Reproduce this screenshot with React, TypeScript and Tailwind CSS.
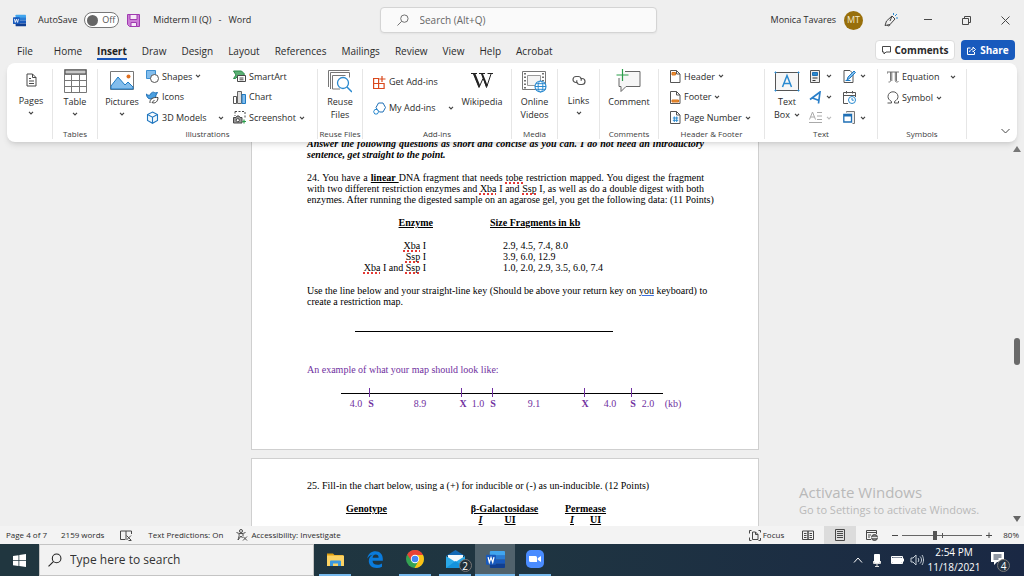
import type { ReactNode } from 'react';

const ui = "font-['Open_Sans','Noto_Sans',sans-serif]";

function Svg({ w, h, box, children }: { w: number; h: number; box?: string; children: ReactNode }) {
  return (
    <svg width={w} height={h} viewBox={box ?? `0 0 ${w} ${h}`} fill="none" stroke="#484848" className="shrink-0" aria-hidden="true">
      {children}
    </svg>
  );
}

function Chevron({ color = '#444' }: { color?: string }) {
  return (
    <Svg w={6} h={4}>
      <path d="M1 .8 3 2.8 5 .8" stroke={color} strokeWidth="1.2" />
    </Svg>
  );
}

/* ---------- Ribbon structure ---------- */

function Group({ label, width, children }: { label?: string; width: string; children: ReactNode }) {
  return (
    <section className={`flex shrink-0 flex-col ${width}`}>
      <div className="flex h-[62px]">{children}</div>
      <div className="h-3 text-center text-[8px] leading-3 whitespace-nowrap text-[#404040]">{label}</div>
    </section>
  );
}

function Divider() {
  return <div className="my-[3px] w-px shrink-0 bg-[#e6e6e6]" />;
}

function Big({ icon, lines, chevron, inlineChevron, width, low }: { icon: ReactNode; lines: string[]; chevron?: boolean; inlineChevron?: boolean; width: string; low?: boolean }) {
  return (
    <button className={`flex h-[60px] shrink-0 flex-col items-center ${width}`}>
      <span className={`flex items-center ${low ? 'h-7' : 'h-[29px]'}`}>{icon}</span>
      {lines.map((l, i) => (
        <span key={l} className="flex items-center gap-1 text-[9px] leading-[13px] whitespace-nowrap">
          {l}
          {inlineChevron && i === lines.length - 1 && <Chevron />}
        </span>
      ))}
      {chevron && <span className="flex h-3 items-center"><Chevron /></span>}
    </button>
  );
}

function Row({ icon, text, chevron, far, tall }: { icon: ReactNode; text: string; chevron?: boolean; far?: boolean; tall?: boolean }) {
  return (
    <button className={`flex items-center gap-[3px] text-[9px] whitespace-nowrap ${tall ? 'h-[26px]' : 'h-[21px]'}`}>
      {icon}
      <span>{text}</span>
      {chevron && <span className={far ? 'ml-auto' : ''}><Chevron /></span>}
    </button>
  );
}

function IconButton({ label, chevron, muted, children }: { label: string; chevron?: boolean; muted?: boolean; children: ReactNode }) {
  return (
    <button aria-label={label} className="flex h-[21px] items-center gap-1">
      {children}
      {chevron && <Chevron color={muted ? '#bbb' : '#444'} />}
    </button>
  );
}

/* ---------- Icons ---------- */

const PagesIcon = () => (
  <Svg w={11} h={14}>
    <path d="M1 1h5.5L10 4.5V13H1z M6.5 1v3.5H10 M3 5.5h2 M3 8h5 M3 10.5h5" />
  </Svg>
);
const TableIcon = () => (
  <Svg w={23} h={24}>
    <path d="M1 1h21v4H1z" fill="#c8c8c8" />
    <path d="M.5.5h22v23H.5z M.5 5.5h22 M.5 11.5h22 M.5 17.5h22 M7.5 5v18.500 M15.500 5v18.500" stroke="#777" />
  </Svg>
);
const PicturesIcon = () => (
  <Svg w={24} h={20}>
    <path d="M.5.5h23v18H.5z" fill="#fff" stroke="#777" />
    <path d="M1 15 8 6l7 8 3-3 5 5v2H1z" fill="#83bdec" stroke="#1e7bc4" />
    <circle cx="18.500" cy="5.500" r="2" fill="#e07020" stroke="none" />
  </Svg>
);
const ShapesIcon = () => (
  <Svg w={13} h={13}>
    <path d="M.5.5h9v8h-9z" fill="#83bdec" stroke="#3d8fd1" />
    <circle cx="8.500" cy="8.500" r="4" fill="#fff" stroke="#555" />
  </Svg>
);
const IconsIcon = () => (
  <Svg w={13} h={13}>
    <path d="M.5 3c1 1.500 3 1.500 4 .5C5 1 8 .5 9 2l2.500-.5L10 4c0 3-2 4-5 4C2 8 .5 6 .5 3z" fill="#4a9fe0" stroke="#1e6fb5" />
    <path d="M4 12c-.5-4 3-6 8-5.500 0 4-3 6.500-6 5L8.500 9" fill="#fff" stroke="#444" />
  </Svg>
);
const CubeIcon = () => (
  <Svg w={13} h={13}>
    <path d="m6.500 1 5 2.500v6l-5 2.800-5-2.800v-6z M1.500 3.500l5 2.700 5-2.700 M6.500 6.200v6" stroke="#2077c0" strokeWidth="1.100" fill="#f1f8fd" />
  </Svg>
);
const SmartArtIcon = () => (
  <Svg w={13} h={13}>
    <path d="M.5 1h8l3 3-1.500 2H5l-2.500 2.500H.5L3 5z" fill="#5db075" stroke="#2a8b4a" />
    <path d="M4.500 5.500h8v6h-8z M6.500 8h4 M6.500 9.800h4" fill="#fff" />
  </Svg>
);
const ChartIcon = () => (
  <Svg w={13} h={13}>
    <path d="M.5 5.500h3v7h-3z" fill="#fff" stroke="#555" />
    <path d="M4.500.5h4v12h-4z" fill="#ddd" stroke="#666" />
    <path d="M9 3.500h3.500v9H9z" fill="#83bdec" stroke="#1e7bc4" />
  </Svg>
);
const ScreenshotIcon = () => (
  <Svg w={13} h={13}>
    <path d="M2 .5h10V8 M2 .5V5" strokeDasharray="2 1.500" />
    <path d="M.5 6.500H3l1-1.500h2l1 1.500h2V12H.5z" fill="#999" />
    <circle cx="4.800" cy="9.200" r="1.600" fill="#fff" />
    <path d="M11 8.500v4 M9.200 10.500H13" stroke="#2a9d4a" strokeWidth="1.200" />
  </Svg>
);
const ReuseIcon = () => (
  <Svg w={24} h={24}>
    <path d="M.5 18V1.500H21.500 M2.500 20V3.500h19v5 M12 20H4.500V6.500h13" stroke="#777" />
    <circle cx="15" cy="14" r="5.500" fill="#fff" stroke="#2a8ad0" strokeWidth="1.300" />
    <path d="m19 18 5 5" stroke="#2a8ad0" strokeWidth="1.500" />
  </Svg>
);
const GetAddinsIcon = () => (
  <Svg w={13} h={13}>
    <path d="M.6 2.500h5v5h-5z M.6 7.500h5v5h-5z M5.600 7.500h5.500v5H5.600z M9 0v6 M6.500 3h6" stroke="#d9481c" strokeWidth="1.200" />
  </Svg>
);
const MyAddinsIcon = () => (
  <Svg w={13} h={13}>
    <path d="M5.500 1h4.500l2.500 4.500L10 10H6.500L4.500 8 3 5.500z" stroke="#1e6fb5" />
    <path d="M1.800 7.500h2.500l1.300 2.300L4.300 12H1.800L.6 9.800z" fill="#fff" stroke="#2a8ad0" />
  </Svg>
);
const WikipediaIcon = () => (
  <Svg w={22} h={18}>
    <path d="M0 1.500h6 M8 1.500h6 M16.500 1.500H22" stroke="#222" />
    <path d="M2.500 2 8 15.500l4-9 M11 2l4.500 13.500L20 2" stroke="#222" strokeWidth="1" />
    <path d="m3.500 2 4.800 12 M11 2l4.800 12" stroke="#222" strokeWidth="2" />
  </Svg>
);
const VideoIcon = () => (
  <Svg w={25} h={24}>
    <path d="M.5 2.500h23v18H.5z" fill="#fff" stroke="#777" />
    <path d="M5.500 6.500h13v10h-13z" fill="#f4f4f4" stroke="#999" />
    <path d="M3 4v16 M21 4v8" stroke="#444" strokeWidth="1.500" strokeDasharray="1.500 2" />
    <circle cx="18.500" cy="17.500" r="5.500" fill="#fff" stroke="#2a8ad0" strokeWidth="1.100" />
    <path d="M13 17.500h11 M14 14.700h9 M14 20.300h9" stroke="#2a8ad0" />
    <ellipse cx="18.500" cy="17.500" rx="2.400" ry="5.500" stroke="#2a8ad0" />
  </Svg>
);
const LinksIcon = () => (
  <Svg w={14} h={11}>
    <path d="M5.500 7.500H4a3 3 0 0 1 0-6h2.500a3 3 0 0 1 2.500 4.300" stroke="#555" strokeWidth="1.200" />
    <path d="M8.500 3.500H10a3 3 0 0 1 0 6H7.500A3 3 0 0 1 5 5.200" stroke="#555" strokeWidth="1.200" />
  </Svg>
);
const CommentIcon = () => (
  <Svg w={26} h={24}>
    <path d="M9 2.500h15v15H10l-5 5v-5H3V9" fill="#f6f6f6" stroke="#666" />
    <path d="M6.500 0v12 M.5 6h12" stroke="#2a9d4a" strokeWidth="1.200" />
  </Svg>
);
function PageIcon({ kind }: { kind: 'header' | 'footer' | 'number' }) {
  return (
    <Svg w={11} h={13}>
      <path d="M.5.5h6l3.500 3.500v8.500H.5z M6.500.5v3.500H10" fill="#fff" stroke="#555" />
      {kind === 'header' && <path d="M2 2.500h3.500v2.500H2z" fill="#e69138" stroke="#d9741c" />}
      {kind === 'footer' && <path d="M2 9h6.500v2H2z" fill="#e69138" stroke="#d9741c" />}
      {kind === 'number' && <path d="M4.300 5.500v5.500 M6.700 5.500v5.500 M2.800 7h5.400 M2.800 9.300h5.400" stroke="#2a8ad0" />}
    </Svg>
  );
}
const TextBoxIcon = () => (
  <Svg w={26} h={22}>
    <path d="M1.500 2.500h23v18h-23z" fill="#f6f6f6" stroke="#555" />
    <path d="M8.500 17 13 5.500 17.500 17 M10 13.500h6" stroke="#2a8ad0" strokeWidth="1.500" />
    <path d="M1 2h1v1H1z M24 2h1v1h-1z M1 20h1v1H1z M24 20h1v1h-1z" fill="#2a8ad0" stroke="#2a8ad0" />
  </Svg>
);
const QuickPartsIcon = () => (
  <Svg w={13} h={13}>
    <path d="M1.500.5h9v12h-9z" fill="#eee" stroke="#555" />
    <path d="M3.500 2.500h5v3h-5z" fill="#2a8ad0" stroke="#1e6fb5" />
    <path d="M3.500 8h5 M3.500 10.500h3" stroke="#333" />
  </Svg>
);
const WordArtIcon = () => (
  <Svg w={13} h={13}>
    <path d="M1 8.500 11 1 9.500 12.500 M3.500 7l6.500 2.500" stroke="#2a7fc9" strokeWidth="1.700" />
  </Svg>
);
const DropCapIcon = () => (
  <Svg w={13} h={13}>
    <path d="m.5 8.500 3-7.500 3 7.500 M1.500 6h4 M8 1.500h5 M8 5h5 M8 8.500h5 M0 11.500h13" stroke="#aaa" />
  </Svg>
);
const SignatureIcon = () => (
  <Svg w={13} h={13}>
    <path d="M1 .5h6l3 3v9H1z" fill="#fff" stroke="#555" />
    <path d="m4 10 1-3 6-6 1.500 1.500-6 6z" fill="#83bdec" stroke="#1e7bc4" />
    <path d="M2.500 10.500h5" stroke="#1e7bc4" />
  </Svg>
);
const DateIcon = () => (
  <Svg w={13} h={13}>
    <path d="M5 12.500H.5v-11h12V6 M.5 4.500h12 M3.500 0v2.500 M9.500 0v2.500" stroke="#555" />
    <circle cx="9" cy="9" r="3.500" fill="#fff" stroke="#2a8ad0" />
    <path d="M9 7v2.200h1.800" stroke="#2a8ad0" />
  </Svg>
);
const ObjectIcon = () => (
  <Svg w={13} h={13}>
    <path d="M3.500 1.500V.5h8v12h-2" stroke="#777" fill="#f0f0f0" />
    <path d="M.8 3.500h7.700v7.500H.8z" fill="#fff" stroke="#1e6fb5" strokeWidth="1.300" />
    <path d="M1 4.500h7.500" stroke="#1e6fb5" strokeWidth="2" />
  </Svg>
);
const PiIcon = () => (
  <Svg w={12} h={12}>
    <path d="M0 1h12 M0 1v2 M3.500 1v8.500c0 1.500-1 1.800-2 1.500 M8.300 1v8.500c0 1.800 1.700 1.800 3.200 1 M4.800 1v9 M9.500 1v9" stroke="#666" strokeWidth=".9" />
  </Svg>
);
const OmegaIcon = () => (
  <Svg w={12} h={13}>
    <path d="M.5 12h4V10.500C2 9 1 7.500 1 5.500A4.800 4.800 0 0 1 6 .8a4.800 4.800 0 0 1 5 4.700c0 2-1 3.500-3.500 5V12h4V10" stroke="#555" />
  </Svg>
);
const WordIcon = ({ size }: { size: number }) => (
  <Svg w={size} h={size} box="0 0 20 20">
    <g stroke="none">
      <path d="M5 1h14a1 1 0 0 1 1 1v4H4V2a1 1 0 0 1 1-1z" fill="#41a5ee" />
      <path d="M4 5.500h16V10H4z" fill="#2b7cd3" />
      <path d="M4 10h16v4.500H4z" fill="#185abd" />
      <path d="M4 14.500h16V18a1 1 0 0 1-1 1H5a1 1 0 0 1-1-1z" fill="#103f91" />
      <rect y="5" width="10.500" height="10.500" rx="1" fill="#185abd" />
    </g>
    <path d="m2.200 7.500 1.300 5.500 1.800-5 1.800 5 1.300-5.500" stroke="#fff" strokeWidth="1.300" />
  </Svg>
);
const SearchGlass = ({ size, color }: { size: number; color: string }) => (
  <Svg w={size} h={size} box="0 0 13 13">
    <circle cx="8" cy="5" r="4" stroke={color} />
    <path d="m5 8-4.500 4.500" stroke={color} />
  </Svg>
);

/* ---------- Document ---------- */

function Wavy({ children }: { children: ReactNode }) {
  return (
    <span className="underline decoration-[#e53935] decoration-dotted decoration-2 underline-offset-1 [text-decoration-skip-ink:none]">{children}</span>
  );
}

const tabs = ['File', 'Home', 'Insert', 'Draw', 'Design', 'Layout', 'References', 'Mailings', 'Review', 'View', 'Help', 'Acrobat'];

const ticks = [28, 120, 151, 243, 290];
const mapLabels: { x: number; text: string; bold?: boolean }[] = [
  { x: 15, text: '4.0' },
  { x: 30, text: 'S', bold: true },
  { x: 79, text: '8.9' },
  { x: 122, text: 'X', bold: true },
  { x: 137, text: '1.0' },
  { x: 152, text: 'S', bold: true },
  { x: 193, text: '9.1' },
  { x: 244, text: 'X', bold: true },
  { x: 269, text: '4.0' },
  { x: 292, text: 'S', bold: true },
  { x: 307, text: '2.0' },
  { x: 332, text: '(kb)' },
];

function Document() {
  return (
    <div className="min-w-0 flex-1 font-['Liberation_Serif',serif] text-[10px] leading-[11px] text-black">
      <article className="mx-auto -mt-1 h-[312px] w-[508px] border border-[#cfcfcf] bg-white pr-[54px] pl-[55px]">
        <p className="-mt-px font-bold whitespace-nowrap italic">
          <span className="block [text-align-last:justify]">Answer the following questions as short and concise as you can. I do not need an introductory</span>
          sentence, get straight to the point.
        </p>
        <p className="mt-3 whitespace-nowrap">
          <span className="block [text-align-last:justify]">24. You have a <b className="underline">linear </b>DNA fragment that needs <Wavy>tobe</Wavy> restriction mapped. You digest the fragment</span>
          <span className="block [text-align-last:justify]">with two different restriction enzymes and <Wavy>Xba</Wavy> I and <Wavy>Ssp</Wavy> I, as well as do a double digest with both</span>
          <span className="block [text-align-last:justify]">enzymes. After running the digested sample on an agarose gel, you get the following data: (11 Points)</span>
        </p>
        <table className="mt-3 whitespace-nowrap">
          <thead>
            <tr className="h-[23px] align-top underline">
              <th className="w-[126px] p-0 text-right">Enzyme</th>
              <th className="p-0 pl-[57px] text-left">Size Fragments in kb</th>
            </tr>
          </thead>
          <tbody>
            <tr>
              <td className="p-0 pr-[7px] text-right"><Wavy>Xba</Wavy> I</td>
              <td className="p-0 pl-[70px]">2.9, 4.5, 7.4, 8.0</td>
            </tr>
            <tr>
              <td className="p-0 pr-[7px] text-right"><Wavy>Ssp</Wavy> I</td>
              <td className="p-0 pl-[70px]">3.9, 6.0, 12.9</td>
            </tr>
            <tr>
              <td className="p-0 pr-[7px] text-right"><Wavy>Xba</Wavy> I and <Wavy>Ssp</Wavy> I</td>
              <td className="p-0 pl-[70px]">1.0, 2.0, 2.9, 3.5, 6.0, 7.4</td>
            </tr>
          </tbody>
        </table>
        <p className="mt-3 whitespace-nowrap">
          <span className="block [text-align-last:justify]">Use the line below and your straight-line key (Should be above your return key on <span className="underline decoration-[#3b6fe0]">you</span> keyboard) to</span>
          create a restriction map.
        </p>
        <hr className="mt-6 ml-12 w-[258px] border-t border-black" />
        <p className="mt-8 text-[#7030a0]">An example of what your map should look like:</p>
        <svg width="375" height="28" className="mt-3 ml-[34px]" role="img" aria-label="Example restriction map">
          <path d="M0 6.500h322" stroke="#000" strokeWidth="1" />
          {ticks.map((x) => (
            <path key={x} d={`M${x + 0.5} 1v9`} stroke="#7030a0" />
          ))}
          {mapLabels.map((l) => (
            <text key={l.x} x={l.x} y="20" textAnchor="middle" fontSize="10" fill="#7030a0" fontWeight={l.bold ? 700 : 400}>{l.text}</text>
          ))}
        </svg>
      </article>
      <article className="mx-auto mt-2 h-[600px] w-[508px] border border-[#cfcfcf] bg-white pt-[21px] pl-[55px]">
        <p>25. Fill-in the chart below, using a (+) for inducible or (-) as un-inducible. (12 Points)</p>
        <table className="mt-3 ml-3 w-[290px] table-fixed text-center font-bold whitespace-nowrap">
          <colgroup>
            <col className="w-[95px]" />
            <col className="w-[56px]" />
            <col className="w-[21px]" />
            <col className="w-[48px]" />
            <col className="w-[23px]" />
            <col className="w-[20px]" />
            <col className="w-[27px]" />
          </colgroup>
          <thead>
            <tr className="underline">
              <th className="p-0">Genotype</th>
              <th />
              <th colSpan={2} className="p-0">β-Galactosidase</th>
              <th />
              <th colSpan={2} className="p-0">Permease</th>
            </tr>
          </thead>
          <tbody>
            <tr className="underline">
              <td colSpan={2} />
              <td className="p-0 italic">I</td>
              <td className="p-0 pr-[10px]">UI</td>
              <td />
              <td className="p-0 italic">I</td>
              <td className="p-0">UI</td>
            </tr>
          </tbody>
        </table>
      </article>
    </div>
  );
}

/* ---------- Taskbar ---------- */

function TaskbarApp({ label, open, active, children }: { label: string; open?: boolean; active?: boolean; children: ReactNode }) {
  return (
    <button aria-label={label} className={`flex h-8 w-10 flex-col items-center ${active ? 'bg-[#50626c]' : ''}`}>
      <span className="flex h-[30px] items-center">{children}</span>
      {open && <span className={`h-0.5 bg-[#76b9ed] ${active ? 'w-10' : 'w-8'}`} />}
    </button>
  );
}

function Taskbar() {
  return (
    <footer className="flex h-8 shrink-0 items-center bg-linear-to-r from-[#20363f] via-[#1f3541] to-[#1a2844] text-white">
      <button aria-label="Start" className="flex h-8 w-[39px] items-center justify-center">
        <Svg w={13} h={13}>
          <path d="M0 2l5.500-.8v5H0z M6.300 1 13 0v6.200H6.300z M0 7h5.500v5L0 11.200z M6.300 7H13v6l-6.700-1z" fill="#fff" stroke="none" />
        </Svg>
      </button>
      <label className="flex h-8 w-[275px] items-center gap-2 border border-[#c4c4c4] bg-[#f2f2f2] pl-2">
        <SearchGlass size={14} color="#222" />
        <input aria-label="Search Windows" placeholder="Type here to search" className="min-w-0 flex-1 bg-transparent text-[12px] outline-none placeholder:text-[#333] placeholder:opacity-100" />
      </label>
      <nav aria-label="Apps" className="flex pl-px">
        <TaskbarApp label="File Explorer" open>
          <Svg w={17} h={15}>
            <path d="M0 1.500h6l1.500 1.500H16V6H0z" fill="#e0a010" stroke="none" />
            <path d="M0 3.500h17V14H0z" fill="#fcd364" stroke="none" />
            <path d="M3 14V9.500a1 1 0 0 1 1-1h9a1 1 0 0 1 1 1V14h-3v-2.500H6V14z" fill="#3b9ae0" stroke="none" />
          </Svg>
        </TaskbarApp>
        <TaskbarApp label="Edge">
          <Svg w={16} h={17}>
            <path d="M.3 7.500C1.200 2.500 4.500.3 8.500.3c4.500 0 7.300 3.200 7.300 7.500v1.900H5.500c.3 3 2.300 4 5 4 1.700 0 3.200-.5 4.500-1.300v3.400c-1.500.8-3.200 1.200-5.200 1.200-5 0-8-2.800-8-7 0-3 1.500-5 4-6.300C3 4.200 1.500 5.500.3 7.500zM5.600 6.700h6c0-2-1-3.200-2.900-3.200-1.800 0-2.800 1.200-3.100 3.200z" fill="#0a7bdc" stroke="none" />
          </Svg>
        </TaskbarApp>
        <TaskbarApp label="Chrome" open>
          <Svg w={18} h={18}>
            <g stroke="none">
              <circle cx="9" cy="9" r="9" fill="#34a353" />
              <path d="M1.200 4.500A9 9 0 0 1 16.800 4.500L17 5H9L5.500 11z" fill="#e94335" />
              <path d="M9 5h8A9 9 0 0 1 8.500 18l4-7z" fill="#fbc116" />
              <circle cx="9" cy="9" r="4.200" fill="#fff" />
              <circle cx="9" cy="9" r="3.300" fill="#4285f4" />
            </g>
          </Svg>
        </TaskbarApp>
        <TaskbarApp label="Mail, 2 new" open>
          <span className="relative">
            <Svg w={19} h={18}>
              <g stroke="none">
                <path d="m0 6 9.500-6L19 6z" fill="#1168b5" />
                <path d="M2 5h15v8H2z" fill="#f3f8fb" />
                <path d="M0 6l9.500 6L19 6v12H0z" fill="#2aa9e8" />
                <path d="m0 18 9.500-7 9.500 7z" fill="#1593dc" />
              </g>
            </Svg>
            <span className="absolute top-[9px] left-[13px] flex size-[13px] items-center justify-center rounded-full border border-[#777] bg-[#22303a] text-[10px] leading-none">2</span>
          </span>
        </TaskbarApp>
        <TaskbarApp label="Word" open active><WordIcon size={19} /></TaskbarApp>
        <TaskbarApp label="Zoom" open>
          <Svg w={18} h={18}>
            <rect width="18" height="18" rx="5" fill="#4a8cff" stroke="none" />
            <path d="M3 6h6.500a1.500 1.500 0 0 1 1.500 1.500V12H4.500A1.500 1.500 0 0 1 3 10.500z M11.700 8.200 15 6v6l-3.300-2.200z" fill="#fff" stroke="none" />
          </Svg>
        </TaskbarApp>
      </nav>
      <div className="ml-auto flex h-8 items-center text-[10px]">
        <Svg w={10} h={6}><path d="m1 5.500 4-4.500 4 4.500" stroke="#fff" /></Svg>
        <span className="ml-[10px]"><Svg w={8} h={13}><path d="M1.500.5h5v8h-5z" fill="#fff" stroke="#fff" /><path d="M.5 7v2.500h7V7 M4 10v2 M2 12.500h4" stroke="#ddd" /></Svg></span>
        <span className="ml-[10px]"><Svg w={13} h={8}><path d="M.5.500h11v7H.5z" stroke="#fff" /><path d="M1.500 2h9v4.500h-9z" fill="#fff" stroke="#fff" /><path d="M12.500 2.500v3" stroke="#fff" /></Svg></span>
        <span className="ml-[6px]"><Svg w={14} h={12}><path d="M1 4h2l3-3v10L3 8H1z M8 4c1 1 1 3 0 4 M10 2.500c2 2 2 5 0 7 M12 1c2 3 2 7 0 10" stroke="#c5ced6" /></Svg></span>
        <time className="w-[60px] text-center leading-[15px]">2:54 PM<br />11/18/2021</time>
        <button aria-label="Notifications, 4" className="relative mr-[15px] ml-[7px]">
          <Svg w={18} h={20}>
            <path d="M0 2h13v10H6l-3 3v-3H0z" fill="#fff" stroke="none" />
            <path d="M2.500 5h8 M2.500 7h8 M2.500 9h5" stroke="#20304a" />
          </Svg>
          <span className="absolute top-[9px] left-[6px] flex size-[13px] items-center justify-center rounded-full border border-[#777] bg-[#263344] text-[10px] leading-none">4</span>
        </button>
      </div>
    </footer>
  );
}

/* ---------- App ---------- */

export default function App() {
  return (
    <div className={`flex h-screen flex-col overflow-hidden bg-[#efefef] text-[#2b2b2b] ${ui}`}>
      <header className="flex h-10 shrink-0 items-center justify-between text-[9px]">
        <div className="flex flex-1 items-center pl-[13px]">
          <WordIcon size={13} />
          <span className="ml-3" id="autosave">AutoSave</span>
          <button role="switch" aria-checked="false" aria-labelledby="autosave" className="ml-[7px] flex h-4 w-[35px] items-center gap-1 rounded-full border border-[#777] bg-white pl-[2px] text-[9px] text-[#555]">
            <span className="size-[11px] rounded-full bg-[#666]" />
            Off
          </button>
          <button aria-label="Save" className="ml-2">
            <Svg w={13} h={13}>
              <path d="M.5.5h12v12h-10l-2-2z" fill="#cc7fd6" stroke="#a03bb0" />
              <path d="M3 .5h7v5H3z M4 8.500h5.500v4H4z" fill="#f7eaf8" stroke="#a03bb0" />
            </Svg>
          </button>
          <h1 className="ml-[13px] flex gap-[7px]"><span>Midterm II (Q)</span><span>-</span><span>Word</span></h1>
        </div>
        <label className="ml-[13px] flex h-[26px] w-[277px] items-center gap-[11px] rounded border border-[#d4d4d4] bg-[#fafafa] pl-4 shadow-xs">
          <SearchGlass size={12} color="#666" />
          <input aria-label="Search" placeholder="Search (Alt+Q)" className="min-w-0 flex-1 bg-transparent text-[10px] outline-none placeholder:text-[#666] placeholder:opacity-100" />
        </label>
        <div className="flex flex-1 items-center justify-end pr-[14px]">
          <span>Monica Tavares</span>
          <span className="ml-2 flex size-[19px] items-center justify-center rounded-full bg-[#986f0b] text-[#f5e9c8]">MT</span>
          <button aria-label="What's new" className="ml-[21px]">
            <Svg w={14} h={14}>
              <path d="M1 12.500 2.500 8 8 3l3 3-5 5.500z M3 12c1 1.500 3 1 3-.5 M8 3l-2 5" stroke="#444" />
              <path d="M9.500 2V0 M11 3l2-2 M12 5h2" stroke="#2a8ad0" />
            </Svg>
          </button>
          <button aria-label="Minimize" className="ml-[26px]"><Svg w={8} h={10}><path d="M0 4.500h8" /></Svg></button>
          <button aria-label="Restore" className="ml-[30px]"><Svg w={9} h={9}><path d="M.5 2.500h6v6h-6z M2.500 2.500v-2h6v6h-2" /></Svg></button>
          <button aria-label="Close" className="ml-[30px]"><Svg w={9} h={9}><path d="m.5.500 8 8 M8.500.500l-8 8" /></Svg></button>
        </div>
      </header>

      <div className="flex h-[23px] shrink-0 items-start justify-between pr-[9px] pl-[17px]">
        <nav aria-label="Ribbon tabs" className="flex gap-[15px] pt-1 text-[10px]">
          {tabs.map((t) => (
            <button key={t} className={`h-4 border-b-2 first:mr-[6px] ${t === 'Insert' ? 'border-[#1a56b8] font-bold text-[#222]' : 'border-transparent'}`}>
              <span className="block leading-[14px]">{t}</span>
            </button>
          ))}
        </nav>
        <div className="flex gap-[6px] text-[10px] font-bold">
          <button className="flex h-5 w-20 items-center justify-center gap-1 rounded border border-[#ddd] bg-white">
            <Svg w={9} h={9}><path d="M.5.500h8v5.500H4L2 8V6H.5z" /></Svg>
            Comments
          </button>
          <button className="flex h-5 w-[54px] items-center justify-center gap-1 rounded bg-[#185abd] text-white">
            <Svg w={9} h={9}><path d="M3.500 2H.5v6.500h7V6 M2.500 6C3 4 4.500 3 6 3V1l2.500 2.500L6 6V4.500" stroke="#fff" /></Svg>
            Share
          </button>
        </div>
      </div>

      <div className="z-10 mx-[7px] flex h-[79px] shrink-0 rounded-lg bg-white pt-[3px] shadow-md">
        <Group width="w-[45px]"><Big width="w-12" low icon={<PagesIcon />} lines={['Pages']} chevron /></Group>
        <Divider />
        <Group width="w-11" label="Tables"><Big width="w-11" icon={<TableIcon />} lines={['Table']} chevron /></Group>
        <Divider />
        <Group width="w-[219px]" label="Illustrations">
          <Big width="w-12" icon={<PicturesIcon />} lines={['Pictures']} chevron />
          <div className="flex w-[78px] flex-col">
            <Row icon={<ShapesIcon />} text="Shapes" chevron />
            <Row icon={<IconsIcon />} text="Icons" />
            <Row icon={<CubeIcon />} text="3D Models" chevron far />
          </div>
          <div className="ml-[9px] flex flex-col">
            <Row icon={<SmartArtIcon />} text="SmartArt" />
            <Row icon={<ChartIcon />} text="Chart" />
            <Row icon={<ScreenshotIcon />} text="Screenshot" chevron />
          </div>
        </Group>
        <Divider />
        <Group width="w-11" label="Reuse Files"><Big width="w-11" icon={<ReuseIcon />} lines={['Reuse', 'Files']} /></Group>
        <Divider />
        <Group width="w-[148px]" label="Add-ins">
          <div className="flex w-[91px] flex-col pt-[3px] pl-[10px]">
            <Row icon={<GetAddinsIcon />} text="Get Add-ins" tall />
            <Row icon={<MyAddinsIcon />} text="My Add-ins" chevron far tall />
          </div>
          <Big width="w-14" icon={<WikipediaIcon />} lines={['Wikipedia']} />
        </Group>
        <Divider />
        <Group width="w-[45px]" label="Media"><Big width="w-[45px]" icon={<VideoIcon />} lines={['Online', 'Videos']} /></Group>
        <Divider />
        <Group width="w-[41px]"><Big width="w-[41px]" low icon={<LinksIcon />} lines={['Links']} chevron /></Group>
        <Divider />
        <Group width="w-[58px]" label="Comments"><Big width="w-[58px]" icon={<CommentIcon />} lines={['Comment']} /></Group>
        <Divider />
        <Group width="w-[105px]" label="Header & Footer">
          <div className="flex flex-col pl-[11px]">
            <Row icon={<PageIcon kind="header" />} text="Header" chevron />
            <Row icon={<PageIcon kind="footer" />} text="Footer" chevron />
            <Row icon={<PageIcon kind="number" />} text="Page Number" chevron />
          </div>
        </Group>
        <Divider />
        <Group width="w-[112px]" label="Text">
          <Big width="w-11" icon={<TextBoxIcon />} lines={['Text', 'Box']} inlineChevron />
          <div className="flex flex-col">
            <IconButton label="Quick Parts" chevron><QuickPartsIcon /></IconButton>
            <IconButton label="WordArt" chevron><WordArtIcon /></IconButton>
            <IconButton label="Drop Cap" chevron muted><DropCapIcon /></IconButton>
          </div>
          <div className="ml-[11px] flex flex-col">
            <IconButton label="Signature Line" chevron><SignatureIcon /></IconButton>
            <IconButton label="Date and Time"><DateIcon /></IconButton>
            <IconButton label="Object" chevron><ObjectIcon /></IconButton>
          </div>
        </Group>
        <Divider />
        <Group width="w-[88px]" label="Symbols">
          <div className="flex w-[78px] flex-col pl-[9px]">
            <Row icon={<PiIcon />} text="Equation" chevron far />
            <Row icon={<OmegaIcon />} text="Symbol" chevron />
          </div>
        </Group>
        <Divider />
        <div className="flex flex-1 items-end justify-end pr-[7px] pb-2">
          <button aria-label="Collapse ribbon"><Svg w={9} h={6}><path d="m.5 1 4 4 4-4" /></Svg></button>
        </div>
      </div>

      <main className="relative flex min-h-0 flex-1 overflow-hidden">
        <Document />
        <div className="flex w-[14px] shrink-0 flex-col items-center py-1">
          <Svg w={8} h={6}><path d="m0 6 4-6 4 6z" fill="#777" stroke="none" /></Svg>
          <div className="mt-[186px] h-[27px] w-[6px] rounded-full bg-[#6a6a6a]" />
          <span className="mt-auto"><Svg w={8} h={6}><path d="m0 0 4 6 4-6z" fill="#666" stroke="none" /></Svg></span>
        </div>
        <div className="absolute right-[41px] bottom-2 w-[184px] whitespace-nowrap text-[#b9b9b9]">
          <p className="text-[15px] leading-5">Activate Windows</p>
          <p className="text-[11px] leading-4">Go to Settings to activate Windows.</p>
        </div>
      </main>

      <div className="flex h-[18px] shrink-0 items-center bg-[#f3f3f3] pl-[6px] text-[8px] whitespace-nowrap">
        <span>Page 4 of 7</span>
        <span className="ml-[14px]">2159 words</span>
        <button aria-label="Proofing" className="ml-4"><Svg w={12} h={11}><path d="M5.500 9.500H.5V1h5.500v8 M6 1h5.500v3 M6.500 5.500l4.500 4.500 M11 5.500 6.500 10 M8.500 10.500h3" /></Svg></button>
        <span className="ml-4">Text Predictions: On</span>
        <button className="ml-[13px] flex items-center gap-[3px]">
          <Svg w={12} h={12}><circle cx="5" cy="2" r="1.500" /><path d="M.5 3.500c3 1.500 6 1.500 9 0 M3 5c.5 2-.5 4-1 6l3-4 1.500 2 M7 5v2 M7 7.500l4 4 M11 7.500l-4 4" /></Svg>
          Accessibility: Investigate
        </button>
        <div className="ml-auto flex items-center pr-[5px]">
          <button className="flex items-center gap-[2px]">
            <Svg w={12} h={11}><path d="M2.500.500H.5v3 M.5 7.500v3h2 M9.500.500h2v2 M11.500 8v2.500h-2 M3.500 2h3L9 4.500v5H3.500z M6.500 2v2.500H9" /></Svg>
            Focus
          </button>
          <button aria-label="Read Mode" className="ml-[18px]"><Svg w={12} h={11}><path d="M.5 1h5.500v8.500H.5z M6 1h5.500v8.500H6z M2 3.500h2.500 M2 5.500h2.500 M2 7.500h2.500 M7.500 3.500H10 M7.500 5.500H10 M7.500 7.500H10" /></Svg></button>
          <button aria-label="Print Layout" className="ml-[10px] flex h-[18px] w-8 items-center justify-center bg-[#dcdcdc]"><Svg w={10} h={12}><path d="M.5.500h9v11h-9z M2 2.500h6 M2 4.500h6 M2 6.500h6 M2 8.500h6" /></Svg></button>
          <button aria-label="Web Layout" className="ml-[10px]"><Svg w={12} h={11}><path d="M5 9.500H.5v-9h10V4 M.5 2.500h10 M2 5h3 M2 7h2" /><circle cx="8.500" cy="7.500" r="3" fill="#777" /><path d="M5.500 7.500h6" stroke="#fff" strokeWidth=".8" /></Svg></button>
          <span className="ml-[14px]"><Svg w={6} h={6}><path d="M0 3.500h6" /></Svg></span>
          <span className="relative ml-1 flex h-[18px] items-center">
            <span className="absolute top-[7px] left-10 h-[5px] w-px bg-[#555]" />
            <input
              type="range"
              aria-label="Zoom"
              min={0}
              max={200}
              defaultValue={80}
              className="h-px w-20 appearance-none bg-[#666] [&::-webkit-slider-thumb]:h-[9px] [&::-webkit-slider-thumb]:w-1 [&::-webkit-slider-thumb]:appearance-none [&::-webkit-slider-thumb]:bg-[#555]"
            />
          </span>
          <span className="ml-1"><Svg w={6} h={6}><path d="M0 3.500h6 M3 .5v6" /></Svg></span>
          <span className="ml-[11px]">80%</span>
        </div>
      </div>
      <Taskbar />
    </div>
  );
}
